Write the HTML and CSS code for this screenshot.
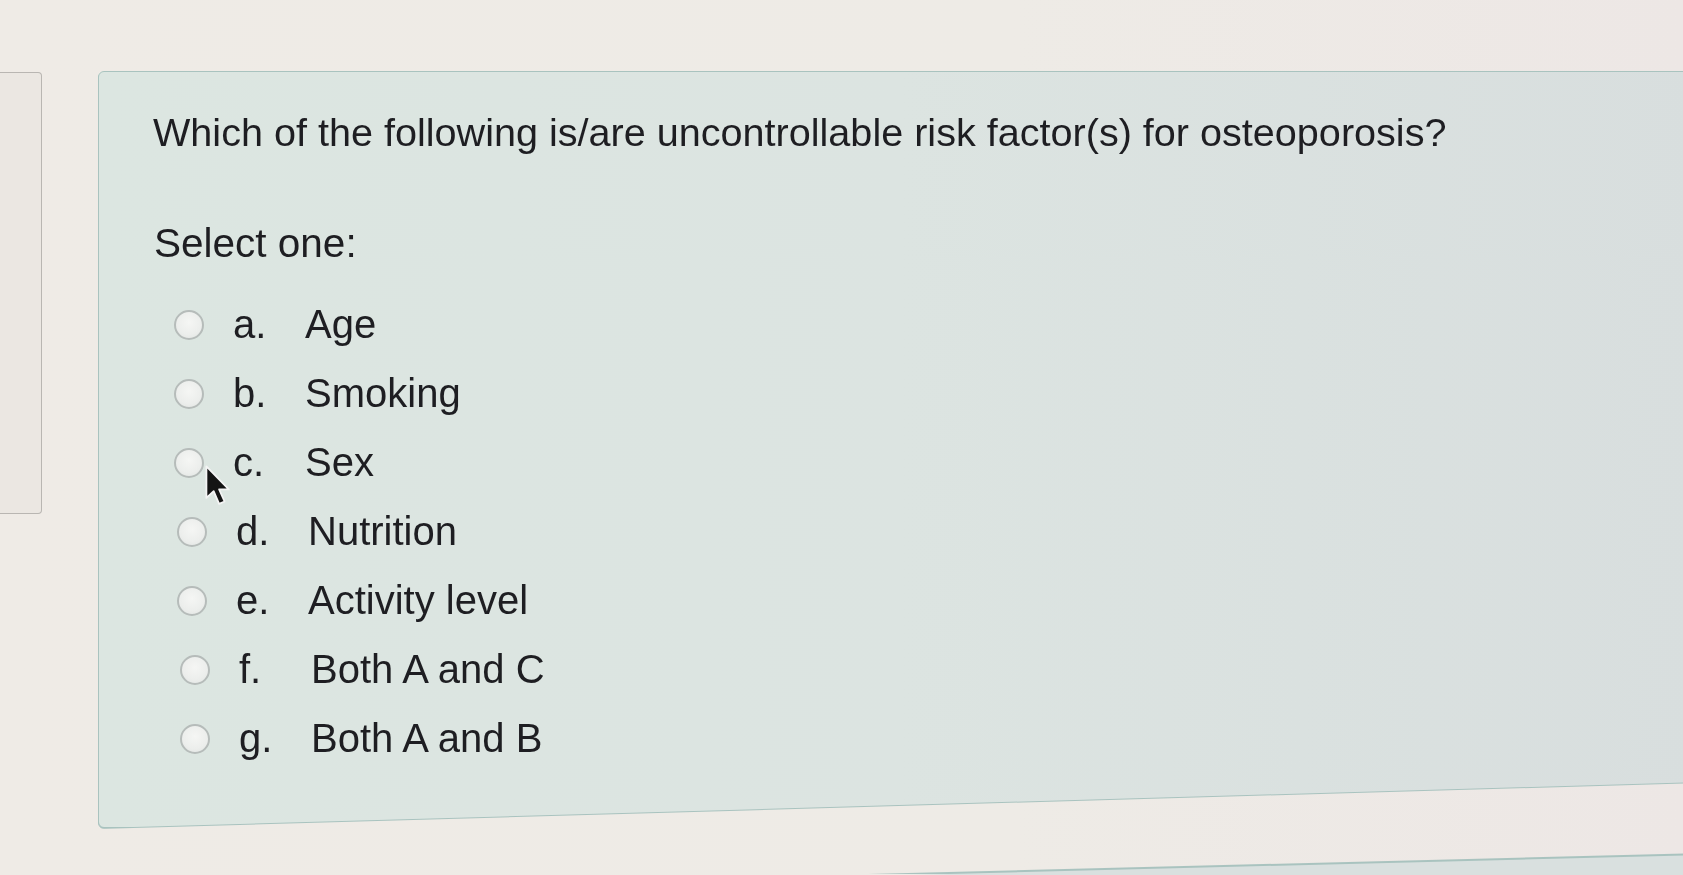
FILE: index.html
```html
<!DOCTYPE html>
<html lang="en">
<head>
<meta charset="utf-8">
<title>Quiz question</title>
<link rel="stylesheet" href="styles.css">
</head>
<body>
<div class="page">
  <div class="side-panel"></div>
  <div class="column">
    <div class="card-wrap">
      <div class="card">
        <p class="question">Which of the following is/are uncontrollable risk factor(s) for osteoporosis?</p>
        <p class="prompt">Select one:</p>
        <ul class="options">
          <li class="option"><span class="radio"></span><span class="letter">a.</span><span class="label">Age</span></li>
          <li class="option"><span class="radio"></span><span class="letter">b.</span><span class="label">Smoking</span></li>
          <li class="option"><span class="radio"></span><span class="letter">c.</span><span class="label">Sex</span>
            <svg class="cursor" width="29" height="44" viewBox="0 0 24 36" aria-hidden="true">
              <path d="M2 1 L2 27 L8 21.5 L12.5 32 L17 30 L12.5 20 L20.5 20 Z" fill="#141414" stroke="#f4f4f4" stroke-width="1.5" stroke-linejoin="round"/>
            </svg>
          </li>
          <li class="option shift1"><span class="radio"></span><span class="letter">d.</span><span class="label">Nutrition</span></li>
          <li class="option shift1"><span class="radio"></span><span class="letter">e.</span><span class="label">Activity level</span></li>
          <li class="option shift2"><span class="radio"></span><span class="letter">f.</span><span class="label">Both A and C</span></li>
          <li class="option shift2"><span class="radio"></span><span class="letter">g.</span><span class="label">Both A and B</span></li>
        </ul>
      </div>
    </div>
    <div class="next-wrap">
      <div class="next-card"></div>
    </div>
  </div>
</div>
</body>
</html>
```

FILE: styles.css
```css
html, body {
  margin: 0;
  padding: 0;
}

body {
  width: 1683px;
  height: 875px;
  overflow: hidden;
  background: linear-gradient(90deg, #efebe6 0%, #eeebe6 60%, #ede7e5 100%);
  font-family: "Liberation Sans", Arial, Helvetica, sans-serif;
  color: #1e1e22;
}

.page {
  display: flex;
  align-items: flex-start;
  gap: 56px;
}

.side-panel {
  flex: 0 0 42px;
  height: 442px;
  margin-top: 72px;
  background: #ebe7e2;
  border: 1.5px solid #b9b6b2;
  border-left: none;
  border-radius: 0 4px 4px 0;
  box-sizing: border-box;
}

.column {
  flex: 1;
  display: flex;
  flex-direction: column;
  gap: 27px;
  margin-top: 71px;
  margin-right: -20px;
}

.card-wrap {
  filter: drop-shadow(0 1.5px 0 #a9c3bf);
}

.card {
  background: linear-gradient(90deg, #dce6e1 0%, #dce4e1 50%, #d8dede 100%);
  border: 1.5px solid #a9c3bf;
  border-radius: 6px;
  padding: 37px 0 38px 54px;
  height: 757px;
  box-sizing: border-box;
  clip-path: polygon(0 0, 100% 0, 100% calc(100% - 46px), 0 100%);
}

.question {
  margin: 0;
  font-size: 39.6px;
  line-height: 47px;
}

.prompt {
  margin: 64px 0 0 1px;
  font-size: 40.5px;
  line-height: 46px;
}

.options {
  list-style: none;
  margin: 24px 0 0 0;
  padding: 0;
}

.option {
  position: relative;
  display: flex;
  align-items: center;
  height: 69px;
  font-size: 40px;
}

.shift1 {
  padding-left: 3px;
}

.shift2 {
  padding-left: 6px;
}

.radio {
  flex: 0 0 auto;
  width: 30px;
  height: 30px;
  margin-left: 21px;
  margin-right: 29px;
  border-radius: 50%;
  border: 2px solid #b6bcba;
  background: radial-gradient(circle at 50% 40%, #f5f6f4 0%, #eceeec 60%, #e0e3e1 100%);
  box-sizing: border-box;
}

.letter {
  flex: 0 0 72px;
}

.label {
  white-space: nowrap;
}

.cursor {
  position: absolute;
  left: 51px;
  top: 37px;
}

.next-wrap {
  filter: drop-shadow(0 -1.5px 0 #a9c3bf);
}

.next-card {
  height: 21px;
  background: #d9e0df;
  clip-path: polygon(48% 100%, 100% 0, 100% 100%);
}
```
